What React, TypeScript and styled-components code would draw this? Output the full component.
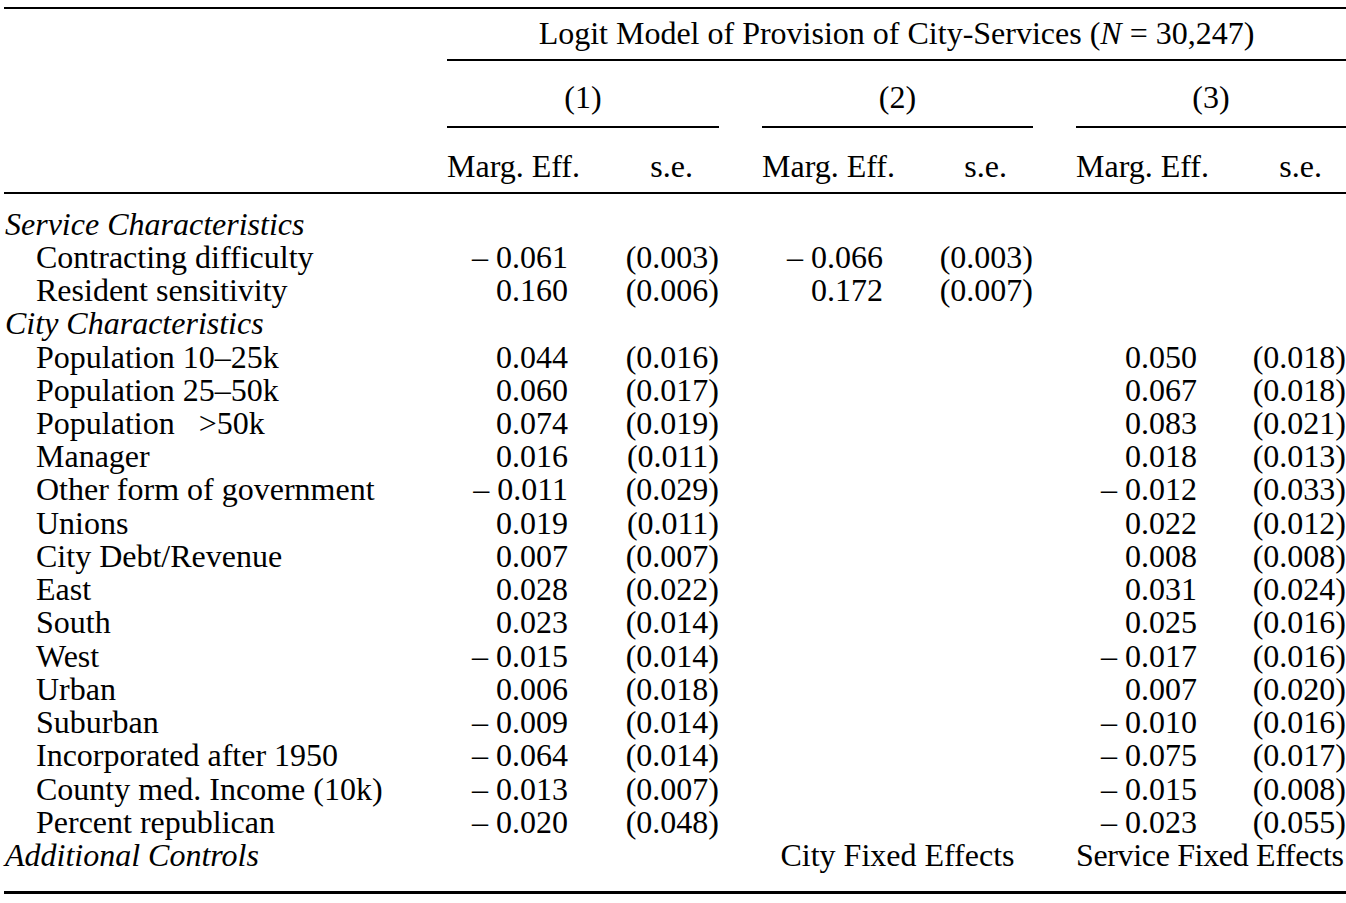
import React from "react";
import styled, {createGlobalStyle} from "styled-components";

const GlobalStyle = createGlobalStyle`
  html, body {
    margin: 0;
    padding: 0;
    background: #fff;
    overflow: hidden;
  }
  body {
    font-family: "Liberation Serif", "Times New Roman", serif;
    color: #000;
  }
`;

const Page = styled.div`
  padding: 7px 0 0 4px;
`;

const Table = styled.table`
  border-collapse: separate;
  border-spacing: 0;
  table-layout: fixed;
  width: 1342px;
  font-size: 32px;
  border-top: 2px solid #000;
  border-bottom: 3px solid #000;
`;

// header cells
const Head = styled.th<{ $rule?: boolean; $align?: string; $pt: number; $pb: number; $pr?: number }>`
  font-weight: normal;
  line-height: 34px;
  white-space: nowrap;
  padding: ${p => p.$pt}px ${p => p.$pr ?? 0}px ${p => p.$pb}px 0;
  text-align: ${p => p.$align ?? "center"};
  border-bottom: ${p => (p.$rule ? "2px solid #000" : "0")};
`;

const Body = styled.tbody`
  tr:first-child td {
    padding-top: 13.6px;
  }
  tr:last-child td {
    padding-bottom: 18.6px;
  }
`;

const Cell = styled.td<{ $align?: string; $pr?: number; $tight?: boolean }>`
  line-height: 33.24px;
  padding: 0 ${p => p.$pr ?? 0}px 0 0;
  white-space: nowrap;
  text-align: ${p => p.$align ?? "right"};
  letter-spacing: ${p => (p.$tight ? "-0.35px" : "normal")};
`;

const Label = styled.td<{ $section?: boolean }>`
  line-height: 33.24px;
  padding: 0 0 0 ${p => (p.$section ? 1 : 32)}px;
  white-space: nowrap;
  font-style: ${p => (p.$section ? "italic" : "normal")};
`;

type Pair = [string, string] | null;
type Row = { label: string; section?: boolean; cols?: [Pair, Pair, Pair] };

const rows: Row[] = [
  {label: "Service Characteristics", section: true},
  {label: "Contracting difficulty", cols: [["\u2013 0.061", "(0.003)"], ["\u2013 0.066", "(0.003)"], null]},
  {label: "Resident sensitivity", cols: [["0.160", "(0.006)"], ["0.172", "(0.007)"], null]},
  {label: "City Characteristics", section: true},
  {label: "Population 10\u201325k", cols: [["0.044", "(0.016)"], null, ["0.050", "(0.018)"]]},
  {label: "Population 25\u201350k", cols: [["0.060", "(0.017)"], null, ["0.067", "(0.018)"]]},
  {label: "Population \u2002>50k", cols: [["0.074", "(0.019)"], null, ["0.083", "(0.021)"]]},
  {label: "Manager", cols: [["0.016", "(0.011)"], null, ["0.018", "(0.013)"]]},
  {label: "Other form of government", cols: [["\u2013 0.011", "(0.029)"], null, ["\u2013 0.012", "(0.033)"]]},
  {label: "Unions", cols: [["0.019", "(0.011)"], null, ["0.022", "(0.012)"]]},
  {label: "City Debt/Revenue", cols: [["0.007", "(0.007)"], null, ["0.008", "(0.008)"]]},
  {label: "East", cols: [["0.028", "(0.022)"], null, ["0.031", "(0.024)"]]},
  {label: "South", cols: [["0.023", "(0.014)"], null, ["0.025", "(0.016)"]]},
  {label: "West", cols: [["\u2013 0.015", "(0.014)"], null, ["\u2013 0.017", "(0.016)"]]},
  {label: "Urban", cols: [["0.006", "(0.018)"], null, ["0.007", "(0.020)"]]},
  {label: "Suburban", cols: [["\u2013 0.009", "(0.014)"], null, ["\u2013 0.010", "(0.016)"]]},
  {label: "Incorporated after 1950", cols: [["\u2013 0.064", "(0.014)"], null, ["\u2013 0.075", "(0.017)"]]},
  {label: "County med. Income (10k)", cols: [["\u2013 0.013", "(0.007)"], null, ["\u2013 0.015", "(0.008)"]]},
  {label: "Percent republican", cols: [["\u2013 0.020", "(0.048)"], null, ["\u2013 0.023", "(0.055)"]]},
];

const groups = ["(1)", "(2)", "(3)"];

export default function App() {
  return (
    <Page>
      <GlobalStyle/>
      <Table>
        <colgroup>
          <col style={{width: 443}}/>
          <col style={{width: 153}}/>
          <col style={{width: 119}}/>
          <col style={{width: 43}}/>
          <col style={{width: 153}}/>
          <col style={{width: 118}}/>
          <col style={{width: 43}}/>
          <col style={{width: 153}}/>
          <col style={{width: 117}}/>
        </colgroup>
        <thead>
          <tr>
            <Head $pt={7} $pb={9}/>
            <Head colSpan={8} $rule $pt={7} $pb={9}>
              Logit Model of Provision of City-Services (<i>N</i> = 30,247)
            </Head>
          </tr>
          <tr>
            <Head $pt={19} $pb={12}/>
            {groups.map((g, i) => (
              <React.Fragment key={g}>
                {i > 0 && <Head $pt={19} $pb={12}/>}
                <Head colSpan={2} $rule $pt={19} $pb={12}>{g}</Head>
              </React.Fragment>
            ))}
          </tr>
          <tr>
            <Head $rule $pt={21} $pb={9}/>
            {groups.map((g, i) => (
              <React.Fragment key={g}>
                {i > 0 && <Head $rule $pt={21} $pb={9}/>}
                <Head $rule $align="left" $pt={21} $pb={9}>Marg. Eff.</Head>
                <Head $rule $align="right" $pr={i === 2 ? 24 : 26} $pt={21} $pb={9}>s.e.</Head>
              </React.Fragment>
            ))}
          </tr>
        </thead>
        <Body>
          {rows.map(r => (
            <tr key={r.label}>
              <Label $section={r.section}>{r.label}</Label>
              {[0, 1, 2].map(i => {
                const pair = r.cols ? r.cols[i] : null;
                return (
                  <React.Fragment key={i}>
                    {i > 0 && <Cell/>}
                    <Cell $pr={32}>{pair ? pair[0] : ""}</Cell>
                    <Cell>{pair ? pair[1] : ""}</Cell>
                  </React.Fragment>
                );
              })}
            </tr>
          ))}
          <tr>
            <Label $section>Additional Controls</Label>
            <Cell colSpan={2}/>
            <Cell/>
            <Cell colSpan={2} $align="center">City Fixed Effects</Cell>
            <Cell/>
            <Cell colSpan={2} $align="left" $tight>Service Fixed Effects</Cell>
          </tr>
        </Body>
      </Table>
    </Page>
  );
}
